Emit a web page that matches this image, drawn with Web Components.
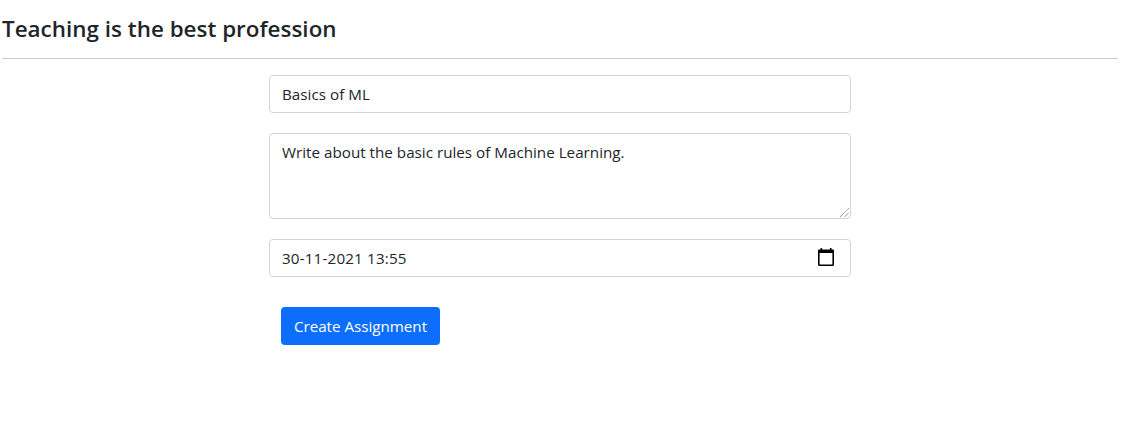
<!DOCTYPE html>
<html lang="en"><head><meta charset="utf-8"><title>Create Assignment</title>
<style>
html,body{margin:0;padding:0;background:#fff}
body{font-family:"Open Sans","Noto Sans","Liberation Sans",sans-serif;color:#212529}
</style></head><body>
<assignment-page>
  <page-header slot="header">Teaching is the best profession</page-header>
  <form-field style="--track:.04px">Basics of ML</form-field>
  <form-field multiline style="--track:.01px">Write about the basic rules of Machine Learning.</form-field>
  <form-field date style="--track:.17px">30-11-2021 13:55</form-field>
  <primary-button>Create Assignment</primary-button>
</assignment-page>
<script>
function def(name, html){
  customElements.define(name, class extends HTMLElement{
    constructor(){super();this.attachShadow({mode:'open'}).innerHTML=html;}
  });
}
def('assignment-page',`<style>
:host{display:block;width:1129px;height:435px;box-sizing:border-box;padding:0 11px 0 2px;overflow:hidden}
.form{display:flex;flex-direction:column;gap:20px;width:582px;margin:16px 0 0 267px}
</style><slot name="header"></slot><div class="form"><slot></slot></div>`);
def('page-header',`<style>
:host{display:block;height:59px;box-sizing:border-box;padding-top:13px;border-bottom:1px solid #ccc;
font:600 22.4px/32px "Open Sans","Noto Sans",sans-serif;color:#212529;letter-spacing:.02px;white-space:nowrap}
</style><slot></slot>`);
def('form-field',`<style>
:host{display:flex;align-items:flex-start;justify-content:space-between;box-sizing:border-box;height:38px;padding:6px 12px;
border:1px solid #ced4da;border-radius:4px;background:#fff;color:#212529;font:400 15.2px/24px "Open Sans","Noto Sans",sans-serif;letter-spacing:var(--track,0);position:relative}
:host([multiline]){height:86px}
svg{display:none}
:host([date]) .cal{display:block;width:16px;height:18px;margin:2px 4px 0 0;flex:none}
:host([multiline]) .grip{display:block;position:absolute;right:0;bottom:0;width:12px;height:12px}
</style><span><slot></slot></span>
<svg class="cal" viewBox="0 0 16 18" aria-hidden="true"><path fill="#000" d="M2.5 0h1.6v1.6h7.8V0h1.6v1.6H15A1 1 0 0 1 16 2.6V16.5a1.5 1.5 0 0 1-1.5 1.5h-13A1.5 1.5 0 0 1 0 16.5V2.6A1 1 0 0 1 1 1.6h1.5zM1.6 5v11.2q0 .3.3.3h12.2q.3 0 .3-.3V5z"/></svg>
<svg class="grip" viewBox="0 0 12 12" aria-hidden="true"><path stroke="#6b6b6b" stroke-width="1" stroke-dasharray="1 .6" fill="none" d="M2 11 11 2M6.5 11 11 6.5"/></svg>`);
def('primary-button',`<style>
:host{display:flex;align-items:center;justify-content:center;align-self:flex-start;box-sizing:border-box;width:159px;height:38px;margin:10px 0 0 12px;
background:#0d6efd;border-radius:4px;color:#fff;font:400 15.2px/24px "Open Sans","Noto Sans",sans-serif;letter-spacing:-.02px;white-space:nowrap}
</style><slot></slot>`);
</script>
</body></html>
